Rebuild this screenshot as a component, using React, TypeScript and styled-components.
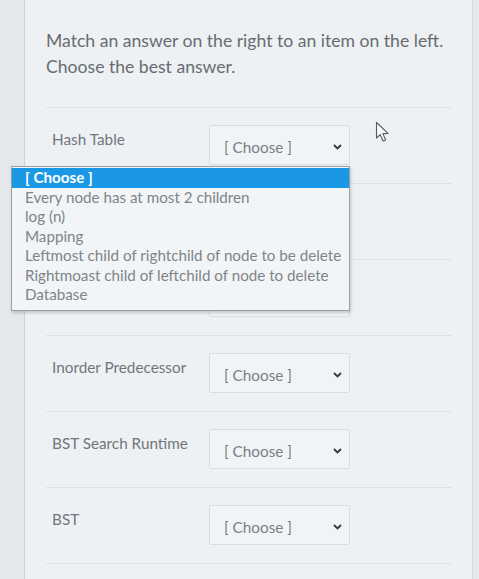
import React from "react";
import styled, { createGlobalStyle } from "styled-components";

const Global = createGlobalStyle`
  html, body { margin: 0; padding: 0; }
  body {
    background: #e4e8eb;
    font-family: Lato, "Open Sans", "Liberation Sans", sans-serif;
    overflow: hidden;
  }
`;

const Page = styled.div`
  width: 479px;
  height: 579px;
  overflow: hidden;
  display: flex;
  align-items: flex-start;
`;

const Card = styled.div`
  margin-left: 24px;
  margin-top: -1px;
  width: 449px;
  min-height: 600px;
  background: #edf1f4;
  border-left: 1px solid #cfd4d8;
  border-right: 1px solid #d3d8dc;
  padding: 29px 20px 0 21px;
  box-sizing: border-box;
`;

const Prompt = styled.div`
  font-size: 17.6px;
  line-height: 26px;
  color: #686c70;
  padding-bottom: 27px;
  border-bottom: 1px solid #dde1e4;
  white-space: nowrap;
`;

const Row = styled.div`
  display: flex;
  align-items: flex-start;
  height: 76px;
  box-sizing: border-box;
  padding-top: 17px;
  border-bottom: 1px solid #dde1e4;
  position: relative;
`;

const Label = styled.div`
  width: 163px;
  padding-left: 6px;
  padding-top: 3px;
  box-sizing: border-box;
  font-size: 15.3px;
  line-height: 22px;
  color: #72767a;
  white-space: nowrap;
`;

const SelectWrap = styled.div`
  position: relative;
`;

const Select = styled.div`
  width: 141px;
  height: 40px;
  box-sizing: border-box;
  border: 1px solid #d9dde0;
  border-radius: 2px;
  background: #f1f4f6;
  display: flex;
  align-items: center;
  justify-content: space-between;
  padding: 3px 7px 0 14px;
  font-size: 15.3px;
  color: #7c8084;
`;

const Chevron = styled.svg`
  width: 9px;
  height: 6px;
  margin-top: 1px;
`;

const List = styled.div`
  position: absolute;
  top: 41px;
  right: 0;
  width: 339px;
  background: #f2f5f7;
  border: 1px solid #9aa0a5;
  box-shadow: 1px 2px 3px rgba(0, 0, 0, 0.18);
  z-index: 5;
  padding: 1px 0 5px;
  box-sizing: border-box;
`;

const Option = styled.div<{ $active?: boolean }>`
  height: 19.5px;
  line-height: 19.5px;
  padding-left: 13px;
  font-size: 15.2px;
  white-space: nowrap;
  overflow: hidden;
  color: ${(p) => (p.$active ? "#ffffff" : "#808488")};
  background: ${(p) => (p.$active ? "#1a98e6" : "transparent")};
  font-weight: ${(p) => (p.$active ? 700 : 400)};
`;

const Cursor = styled.svg`
  position: absolute;
  left: 166px;
  top: -4px;
  width: 17px;
  height: 22px;
`;

const options = [
  "Every node has at most 2 children",
  "log (n)",
  "Mapping",
  "Leftmost child of rightchild of node to be delete",
  "Rightmoast child of leftchild of node to delete",
  "Database",
];

const rows = ["Hash Table", "", "", "Inorder Predecessor", "BST Search Runtime", "BST"];

function Dropdown({ open }: { open?: boolean }) {
  return (
    <SelectWrap>
      <Select>
        <span>[ Choose ]</span>
        <Chevron viewBox="0 0 9 6">
          <path d="M1 1l3.5 3.5L8 1" fill="none" stroke="#35393d" strokeWidth="1.8" />
        </Chevron>
      </Select>
      {open && (
        <List>
          <Option $active>[ Choose ]</Option>
          {options.map((o) => (
            <Option key={o}>{o}</Option>
          ))}
        </List>
      )}
      {open && (
        <Cursor viewBox="0 0 17 22">
          <path
            d="M1.5 1.5 L1.5 17 L5.2 13.6 L8 20 L10.6 18.9 L7.9 12.6 L13 12.4 Z"
            fill="#f7f9fa"
            stroke="#55595d"
            strokeWidth="1.1"
            strokeLinejoin="round"
          />
        </Cursor>
      )}
    </SelectWrap>
  );
}

export default function App() {
  return (
    <Page>
      <Global />
      <Card>
        <Prompt>
          Match an answer on the right to an item on the left.
          <br />
          Choose the best answer.
        </Prompt>
        {rows.map((r, i) => (
          <Row key={i}>
            <Label>{r}</Label>
            <Dropdown open={i === 0} />
          </Row>
        ))}
      </Card>
    </Page>
  );
}
